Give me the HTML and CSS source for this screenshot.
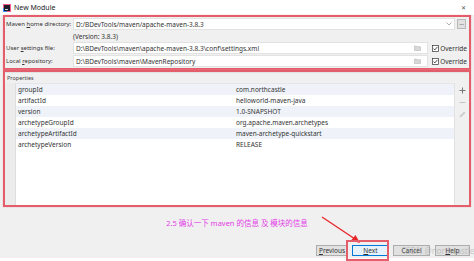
FILE: index.html
```html
<!DOCTYPE html>
<html lang="en">
<head>
    <meta charset="UTF-8">
    <title>New Module</title>
    <link rel="stylesheet" href="styles.css">
</head>
<body>
    <div class="dialog">
        <div class="titlebar">
            <svg class="app-icon" width="8" height="8" viewBox="0 0 8 8">
                <rect width="8" height="8" fill="#fc5a8d"/>
                <rect x="0" y="4" width="4" height="4" fill="#3c8bf0"/>
                <rect x="1" y="1" width="6" height="6" fill="#1d1f2b"/>
                <rect x="2" y="5" width="3" height="0.8" fill="#fff"/>
            </svg>
            <span class="title">New Module</span>
            <span class="close">&#x2715;</span>
        </div>

        <div class="content">
            <div class="settings">
                <div class="row">
                    <label class="label">Maven <u>h</u>ome directory:</label>
                    <div class="field combo">
                        <span class="value">D:/BDevTools/maven/apache-maven-3.8.3</span>
                        <svg class="chevron" width="6" height="4" viewBox="0 0 6 4"><path d="M0.5 0.5 L3 3 L5.5 0.5" fill="none" stroke="#999" stroke-width="0.8"/></svg>
                    </div>
                    <span class="browse">&hellip;</span>
                </div>
                <div class="row version">
                    <span class="label"></span>
                    <span class="value">(Version: 3.8.3)</span>
                </div>
                <div class="row">
                    <label class="label">User <u>s</u>ettings file:</label>
                    <div class="field path">
                        <span class="value">D:\BDevTools\maven\apache-maven-3.8.3\conf\settings.xml</span>
                        <svg class="folder" width="7" height="6" viewBox="0 0 7 6"><path d="M0.5 1 H2.5 L3 1.7 H6.5 V5.5 H0.5 Z" fill="#d8d8d8" stroke="#b8b8b8" stroke-width="0.6"/></svg>
                    </div>
                    <label class="override">
                        <svg class="check" width="7" height="7" viewBox="0 0 7 7"><rect x="0.5" y="0.5" width="6" height="6" fill="#fff" stroke="#333" stroke-width="0.7"/><path d="M1.6 3.6 L2.9 4.9 L5.4 1.9" fill="none" stroke="#222" stroke-width="0.8"/></svg>
                        Override
                    </label>
                </div>
                <div class="row">
                    <label class="label">Local <u>r</u>epository:</label>
                    <div class="field path">
                        <span class="value">D:\BDevTools\maven\MavenRepository</span>
                        <svg class="folder" width="7" height="6" viewBox="0 0 7 6"><path d="M0.5 1 H2.5 L3 1.7 H6.5 V5.5 H0.5 Z" fill="#d8d8d8" stroke="#b8b8b8" stroke-width="0.6"/></svg>
                    </div>
                    <label class="override">
                        <svg class="check" width="7" height="7" viewBox="0 0 7 7"><rect x="0.5" y="0.5" width="6" height="6" fill="#fff" stroke="#333" stroke-width="0.7"/><path d="M1.6 3.6 L2.9 4.9 L5.4 1.9" fill="none" stroke="#222" stroke-width="0.8"/></svg>
                        Override
                    </label>
                </div>
            </div>

            <div class="props">
                <div class="props-title">Properties</div>
                <div class="props-body">
                    <div class="gutter"></div>
                    <div class="table">
                        <div class="tr odd"><span>groupId</span><span>com.northcastle</span></div>
                        <div class="tr"><span>artifactId</span><span>helloworld-maven-java</span></div>
                        <div class="tr odd"><span>version</span><span>1.0-SNAPSHOT</span></div>
                        <div class="tr"><span>archetypeGroupId</span><span>org.apache.maven.archetypes</span></div>
                        <div class="tr odd"><span>archetypeArtifactId</span><span>maven-archetype-quickstart</span></div>
                        <div class="tr"><span>archetypeVersion</span><span>RELEASE</span></div>
                    </div>
                    <div class="tools">
                        <svg width="7" height="7" viewBox="0 0 7 7"><path d="M3.5 0.5 V6.5 M0.5 3.5 H6.5" stroke="#777" stroke-width="1"/></svg>
                        <svg width="7" height="7" viewBox="0 0 7 7"><path d="M0.5 3.5 H6.5" stroke="#c4c4c4" stroke-width="1"/></svg>
                        <svg width="7" height="7" viewBox="0 0 7 7"><path d="M1 6 L1.3 4.7 L5 1 L6 2 L2.3 5.7 Z" fill="#d4d4d4" stroke="#bcbcbc" stroke-width="0.5"/></svg>
                    </div>
                </div>
            </div>

            <div class="note">
                <p class="note-text">2.5 确认一下 maven 的信息 及 模块的信息</p>
                <svg class="arrow" width="468" height="54" viewBox="0 0 468 54">
                    <path d="M319 10 L352 32" stroke="#e8262a" stroke-width="1.3"/>
                    <path d="M357 36 L348 33.5 L352.5 28 Z" fill="#e8262a"/>
                </svg>
                <div class="buttons">
                    <button class="btn prev"><u>P</u>revious</button>
                    <button class="btn next"><u>N</u>ext</button>
                    <button class="btn cancel">Cancel</button>
                    <button class="btn help"><u>H</u>elp</button>
                </div>
                <div class="next-mark"></div>
                <div class="watermark">CSDN @northcastle</div>
            </div>
        </div>
    </div>
</body>
</html>
```

FILE: styles.css
```css
body {
    margin: 0;
    font-family: 'Noto Sans', 'Open Sans', sans-serif;
    font-size: 6.5px;
    color: #333;
    background: #fff;
    white-space: nowrap;
}

.dialog {
    width: 474px;
    height: 261px;
    display: flex;
    flex-direction: column;
    overflow: hidden;
}

.titlebar {
    height: 15px;
    display: flex;
    align-items: center;
    padding: 0 8px 0 3px;
    background: #fff;
    flex: none;
}

.app-icon {
    margin-right: 3px;
}

.title {
    font-size: 7px;
    color: #222;
    flex: 1;
}

.close {
    font-size: 6px;
    color: #555;
}

.content {
    height: 243px;
    background: #f0f0f0;
    padding: 0 3px;
    display: flex;
    flex-direction: column;
    flex: none;
}

/* maven settings */

.settings {
    height: 55px;
    box-sizing: border-box;
    border: 2px solid #e45d6b;
    box-shadow: 0 0 1px #f3a2aa;
    padding: 1px 2px 1px 0;
    display: flex;
    flex-direction: column;
    gap: 1px;
}

.row {
    height: 12px;
    display: flex;
    align-items: center;
}

.row.version {
    height: 10px;
}

.label {
    width: 68px;
    padding-left: 1px;
    box-sizing: border-box;
    flex: none;
    font-size: 6px;
    overflow: hidden;
}

.label u,
.btn u {
    text-decoration-thickness: 0.5px;
    text-underline-offset: 1px;
}

.field {
    height: 12px;
    box-sizing: border-box;
    background: #fff;
    border: 1px solid #e2e2e2;
    display: flex;
    align-items: center;
    padding-left: 2px;
}

.field .value {
    flex: 1;
}

.combo {
    width: 382px;
}

.chevron {
    margin-right: 2px;
}

.browse {
    width: 9px;
    height: 10px;
    margin-left: 2px;
    box-sizing: border-box;
    background: #e1e1e1;
    border: 1px solid #b9b9b9;
    font-size: 6px;
    line-height: 7px;
    text-align: center;
    color: #444;
}

.path {
    width: 359px;
}

.folder {
    margin-right: 6px;
}

.override {
    display: flex;
    align-items: center;
    gap: 1px;
    margin-left: 4px;
}

/* properties */

.props {
    height: 137px;
    box-sizing: border-box;
    border: 2px solid #e45d6b;
    box-shadow: 0 0 1px #f3a2aa;
    display: flex;
    flex-direction: column;
}

.props-title {
    height: 11px;
    font-size: 5.5px;
    line-height: 10px;
    padding-left: 2px;
    border-top: 1px solid #e2e2e2;
    box-sizing: border-box;
    color: #444;
}

.props-body {
    flex: 1;
    display: flex;
}

.gutter {
    width: 10px;
    border-right: 1px solid #dedede;
    background: #ececec;
}

.table {
    flex: 1;
    background: #fff;
    border-top: 1px solid #e6e6e6;
}

.tr {
    height: 11px;
    display: grid;
    grid-template-columns: 220px 1fr;
    align-items: center;
}

.tr span:first-child {
    padding-left: 2px;
}

.tr.odd {
    background: #eff3f9;
}

.tools {
    width: 14px;
    border-left: 1px solid #e2e2e2;
    display: flex;
    flex-direction: column;
    align-items: center;
    padding-top: 4px;
    gap: 5px;
}

/* annotation and buttons */

.note {
    flex: 1;
    position: relative;
    display: flex;
    flex-direction: column;
}

.note-text {
    margin: 0;
    padding: 10px 0 0 0;
    text-align: center;
    font-family: 'Noto Sans', 'Noto Sans CJK SC', sans-serif;
    font-size: 7.5px;
    color: #e33ce8;
}

.arrow {
    position: absolute;
    left: 0;
    top: 0;
}

.buttons {
    margin-top: auto;
    margin-bottom: 2px;
    display: flex;
    justify-content: flex-end;
    padding-right: 1px;
}

.btn {
    height: 11px;
    padding: 0;
    margin: 0 0 0 4px;
    font-family: inherit;
    font-size: 6.5px;
    line-height: 9px;
    color: #333;
    background: #e1e1e1;
    border: 1px solid #adadad;
}

.prev { width: 32px; }
.next { width: 37px; background: #e5f1fb; border-color: #0078d7; }
.cancel { width: 37px; }
.help { width: 35px; margin-left: 5px; }

.next-mark {
    position: absolute;
    left: 343px;
    top: 33px;
    width: 43px;
    height: 21px;
    box-sizing: border-box;
    border: 2px solid #e45d6b;
}

.watermark {
    position: absolute;
    left: 398px;
    top: 39px;
    font-size: 8px;
    line-height: 10px;
    color: rgba(160, 160, 160, 0.55);
}
```
